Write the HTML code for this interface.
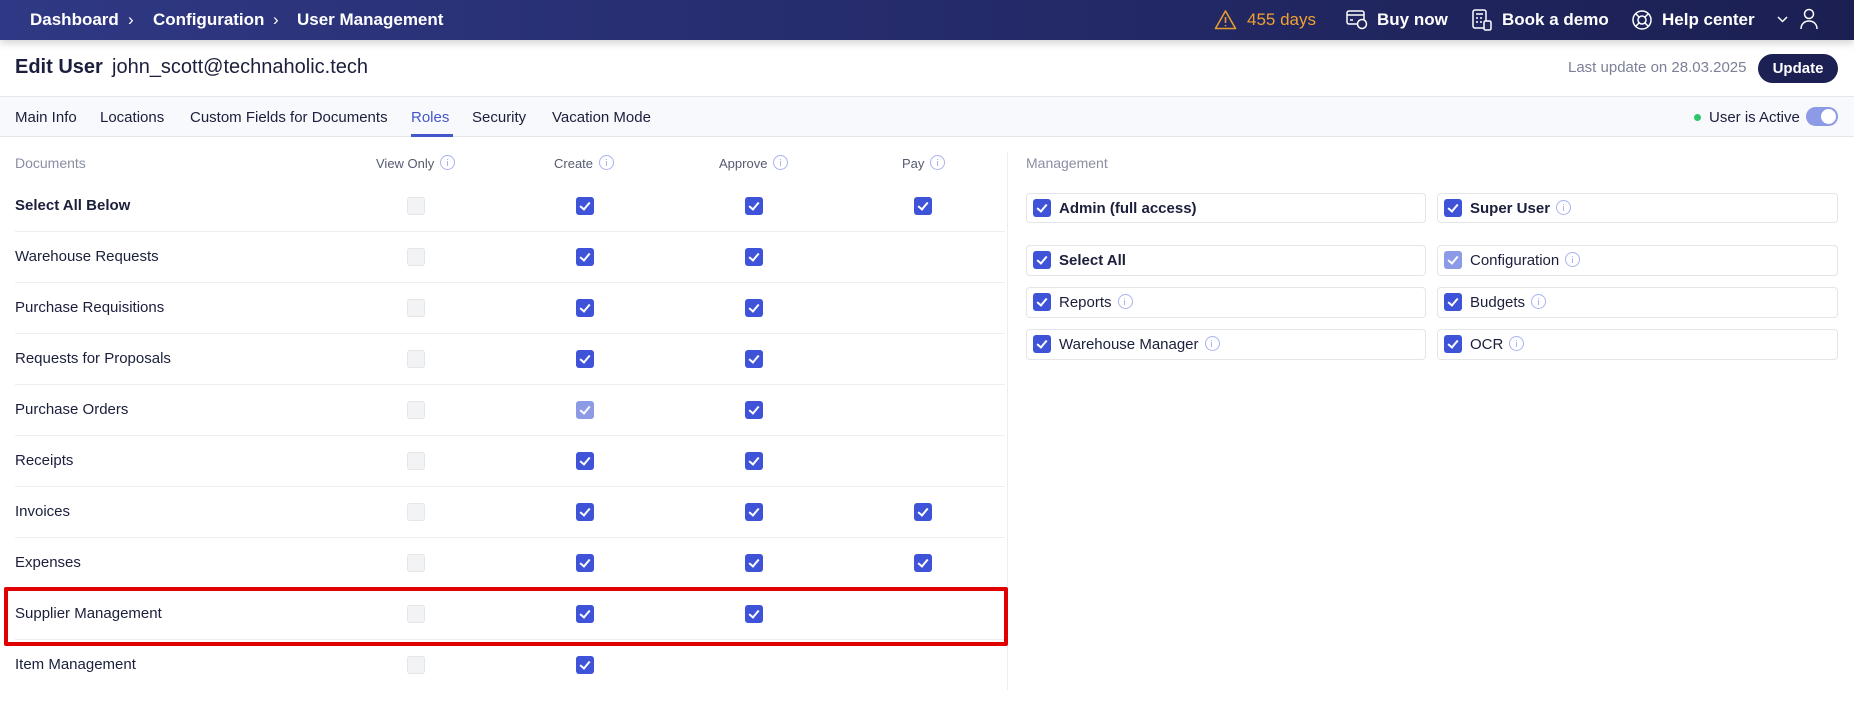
<!DOCTYPE html>
<html><head><meta charset="utf-8"><style>
*{box-sizing:border-box;margin:0;padding:0}
body{width:1854px;height:728px;background:#fff;font-family:"Liberation Sans",sans-serif;color:#1b1f3b;position:relative;overflow:hidden}
.a{position:absolute;white-space:nowrap}
.nav{position:absolute;left:0;top:0;width:1854px;height:40px;background:linear-gradient(90deg,#2f3884,#1b1f52);box-shadow:0 3px 8px rgba(0,0,0,.18)}
.nav .a{color:#fff;font-size:17px;font-weight:bold;top:10px}
.cb{position:absolute;width:18px;height:18px;border-radius:3px;background:#3f53d9}
.cb::after{content:"";position:absolute;left:6px;top:3px;width:4px;height:8px;border:solid #fff;border-width:0 2px 2px 0;transform:rotate(40deg)}
.cb.l{background:#8d9ae6}
.cb.e{background:#f2f3f5;border:1px solid #e4e6ea}
.cb.e::after{display:none}
.i{display:inline-block;width:15px;height:15px;border:1.3px solid #a9b3ee;border-radius:50%;position:relative;vertical-align:-2px;margin-left:6px}
.i::after{content:"";position:absolute;left:5.5px;top:5px;width:1.4px;height:5px;background:#a9b3ee}
.i::before{content:"";position:absolute;left:5.5px;top:2.5px;width:1.4px;height:1.4px;background:#a9b3ee}
.row{font-size:15px;color:#1b1f3b}
.hr{position:absolute;left:15px;width:990px;height:1px;background:#eceef3}
.box{position:absolute;border:1px solid #e3e5ea;border-radius:4px;height:30px;font-size:15px}
.box .cb{left:6px;top:5px}
.box span{position:absolute;left:32px;top:6px}
</style></head><body>
<div class="nav">
<div class="a" style="left:30px">Dashboard</div>
<div class="a" style="left:128px;font-weight:normal">›</div>
<div class="a" style="left:153px">Configuration</div>
<div class="a" style="left:273px;font-weight:normal">›</div>
<div class="a" style="left:297px">User Management</div>
<svg class="a" style="left:1214px;top:9px" width="23" height="21" viewBox="0 0 23 21"><path d="M11.5 2 L21.5 19.5 H1.5 Z" fill="none" stroke="#e89a2a" stroke-width="1.6" stroke-linejoin="round"/><path d="M11.5 8v6M11.5 16v1.2" stroke="#e89a2a" stroke-width="1.6"/></svg>
<div class="a" style="left:1247px;color:#f0a030;font-weight:normal">455 days</div>
<svg class="a" style="left:1346px;top:10px" width="22" height="20" viewBox="0 0 22 20"><rect x="1" y="1" width="17" height="13" rx="2" fill="none" stroke="#fff" stroke-width="1.5"/><path d="M1 5h17M4 10h3" stroke="#fff" stroke-width="1.5"/><circle cx="16" cy="14" r="4.5" fill="#222659" stroke="#fff" stroke-width="1.5"/></svg>
<div class="a" style="left:1377px">Buy now</div>
<svg class="a" style="left:1472px;top:9px" width="20" height="22" viewBox="0 0 20 22"><rect x="1" y="1" width="13" height="18" rx="2" fill="none" stroke="#fff" stroke-width="1.5"/><path d="M4 5h7M4 9h2M8 9h2M4 13h2M8 13h2" stroke="#fff" stroke-width="1.5"/><rect x="12" y="12" width="7" height="9" rx="1.5" fill="#222659" stroke="#fff" stroke-width="1.5"/></svg>
<div class="a" style="left:1502px">Book a demo</div>
<svg class="a" style="left:1631px;top:9px" width="22" height="22" viewBox="0 0 22 22"><circle cx="11" cy="11" r="9" fill="none" stroke="#fff" stroke-width="1.5"/><circle cx="11" cy="11" r="4" fill="none" stroke="#fff" stroke-width="1.5"/><path d="M5 5l3 3M17 5l-3 3M5 17l3-3M17 17l-3-3" stroke="#fff" stroke-width="1.5"/></svg>
<div class="a" style="left:1662px">Help center</div>
<svg class="a" style="left:1777px;top:16px" width="11" height="7" viewBox="0 0 11 7"><path d="M1 1l4.5 4.5L10 1" fill="none" stroke="#fff" stroke-width="1.5"/></svg>
<svg class="a" style="left:1799px;top:8px" width="20" height="22" viewBox="0 0 20 22"><circle cx="10" cy="6" r="4.5" fill="none" stroke="#fff" stroke-width="1.5"/><path d="M2 21c0-5 3.5-8 8-8s8 3 8 8" fill="none" stroke="#fff" stroke-width="1.5"/></svg>
</div>

<div class="a" style="left:15px;top:56px;font-size:20px;font-weight:bold">Edit User</div>
<div class="a" style="left:112px;top:56px;font-size:20px">john_scott@technaholic.tech</div>
<div class="a" style="left:1568px;top:59px;font-size:15px;color:#7c8096">Last update on 28.03.2025</div>
<div class="a" style="left:1758px;top:54px;width:80px;height:29px;border-radius:15px;background:#1c2052;color:#fff;font-size:15px;font-weight:bold;text-align:center;line-height:29px">Update</div>

<div class="a" style="left:0;top:96px;width:1854px;height:41px;background:#f8f9fc;border-top:1px solid #e4e6ec;border-bottom:1px solid #e4e6ec"></div>
<div class="a row" style="left:15px;top:109px">Main Info</div>
<div class="a row" style="left:100px;top:109px">Locations</div>
<div class="a row" style="left:190px;top:109px">Custom Fields for Documents</div>
<div class="a row" style="left:411px;top:109px;color:#4457c9">Roles</div>
<div class="a" style="left:411px;top:134px;width:42px;height:3px;background:#4457c9"></div>
<div class="a row" style="left:472px;top:109px">Security</div>
<div class="a row" style="left:552px;top:109px">Vacation Mode</div>
<div class="a" style="left:1694px;top:114px;width:7px;height:7px;border-radius:50%;background:#2ec66a"></div>
<div class="a row" style="left:1709px;top:109px">User is Active</div>
<div class="a" style="left:1806px;top:107px;width:32px;height:19px;border-radius:10px;background:#8d9ae6"><div style="position:absolute;right:2px;top:2px;width:15px;height:15px;border-radius:50%;background:#fff"></div></div>

<div class="a" style="left:15px;top:155px;font-size:14px;color:#8a8ea3">Documents</div>
<div class="a" style="left:376px;top:155px;font-size:13px;color:#555a70">View Only<span class="i"></span></div>
<div class="a" style="left:554px;top:155px;font-size:13px;color:#555a70">Create<span class="i"></span></div>
<div class="a" style="left:719px;top:155px;font-size:13px;color:#555a70">Approve<span class="i"></span></div>
<div class="a" style="left:902px;top:155px;font-size:13px;color:#555a70">Pay<span class="i"></span></div>
<div class="a" style="left:1007px;top:152px;width:1px;height:538px;background:#eceef3"></div>

<div class="a row" style="left:15px;top:197px;font-weight:bold">Select All Below</div>
<div class="cb e" style="left:407px;top:197px"></div><div class="cb" style="left:576px;top:197px"></div><div class="cb" style="left:745px;top:197px"></div><div class="cb" style="left:914px;top:197px"></div>
<div class="hr" style="top:231px"></div>
<div class="a row" style="left:15px;top:248px">Warehouse Requests</div>
<div class="cb e" style="left:407px;top:248px"></div><div class="cb" style="left:576px;top:248px"></div><div class="cb" style="left:745px;top:248px"></div>
<div class="hr" style="top:282px"></div>
<div class="a row" style="left:15px;top:299px">Purchase Requisitions</div>
<div class="cb e" style="left:407px;top:299px"></div><div class="cb" style="left:576px;top:299px"></div><div class="cb" style="left:745px;top:299px"></div>
<div class="hr" style="top:333px"></div>
<div class="a row" style="left:15px;top:350px">Requests for Proposals</div>
<div class="cb e" style="left:407px;top:350px"></div><div class="cb" style="left:576px;top:350px"></div><div class="cb" style="left:745px;top:350px"></div>
<div class="hr" style="top:384px"></div>
<div class="a row" style="left:15px;top:401px">Purchase Orders</div>
<div class="cb e" style="left:407px;top:401px"></div><div class="cb l" style="left:576px;top:401px"></div><div class="cb" style="left:745px;top:401px"></div>
<div class="hr" style="top:435px"></div>
<div class="a row" style="left:15px;top:452px">Receipts</div>
<div class="cb e" style="left:407px;top:452px"></div><div class="cb" style="left:576px;top:452px"></div><div class="cb" style="left:745px;top:452px"></div>
<div class="hr" style="top:486px"></div>
<div class="a row" style="left:15px;top:503px">Invoices</div>
<div class="cb e" style="left:407px;top:503px"></div><div class="cb" style="left:576px;top:503px"></div><div class="cb" style="left:745px;top:503px"></div><div class="cb" style="left:914px;top:503px"></div>
<div class="hr" style="top:537px"></div>
<div class="a row" style="left:15px;top:554px">Expenses</div>
<div class="cb e" style="left:407px;top:554px"></div><div class="cb" style="left:576px;top:554px"></div><div class="cb" style="left:745px;top:554px"></div><div class="cb" style="left:914px;top:554px"></div>
<div class="hr" style="top:588px"></div>
<div class="a row" style="left:15px;top:605px">Supplier Management</div>
<div class="cb e" style="left:407px;top:605px"></div><div class="cb" style="left:576px;top:605px"></div><div class="cb" style="left:745px;top:605px"></div>
<div class="hr" style="top:639px"></div>
<div class="a row" style="left:15px;top:656px">Item Management</div>
<div class="cb e" style="left:407px;top:656px"></div><div class="cb" style="left:576px;top:656px"></div>
<div class="a" style="left:4px;top:587px;width:1004px;height:59px;border:4px solid #e00000;border-radius:2px"></div>

<div class="a" style="left:1026px;top:155px;font-size:14px;color:#8a8ea3">Management</div>
<div class="box" style="left:1026px;top:193px;width:400px"><div class="cb"></div><span style="font-weight:bold">Admin (full access)</span></div>
<div class="box" style="left:1437px;top:193px;width:401px"><div class="cb"></div><span style="font-weight:bold">Super User<i class="i"></i></span></div>
<div class="box" style="left:1026px;top:245px;width:400px;height:31px"><div class="cb"></div><span style="font-weight:bold">Select All</span></div>
<div class="box" style="left:1437px;top:245px;width:401px;height:31px"><div class="cb l"></div><span>Configuration<i class="i"></i></span></div>
<div class="box" style="left:1026px;top:287px;width:400px;height:31px"><div class="cb"></div><span>Reports<i class="i"></i></span></div>
<div class="box" style="left:1437px;top:287px;width:401px;height:31px"><div class="cb"></div><span>Budgets<i class="i"></i></span></div>
<div class="box" style="left:1026px;top:329px;width:400px;height:31px"><div class="cb"></div><span>Warehouse Manager<i class="i"></i></span></div>
<div class="box" style="left:1437px;top:329px;width:401px;height:31px"><div class="cb"></div><span>OCR<i class="i"></i></span></div>
</body></html>
